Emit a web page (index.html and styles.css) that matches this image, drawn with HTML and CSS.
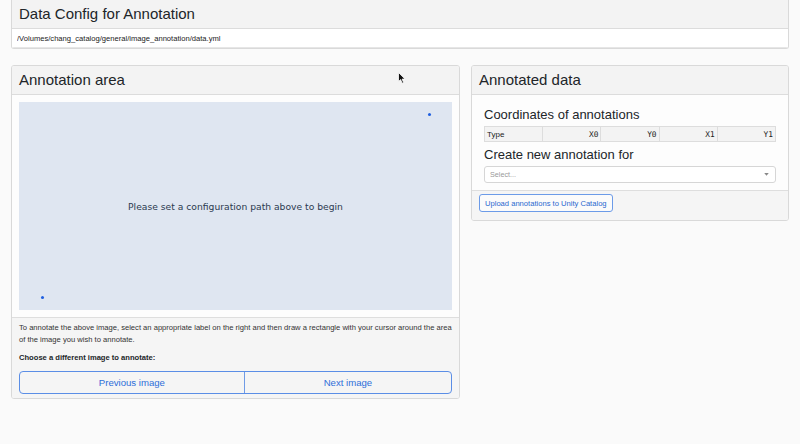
FILE: index.html
```html
<!DOCTYPE html>
<html lang="en">
<head>
    <meta charset="UTF-8">
    <meta name="viewport" content="width=device-width, initial-scale=1.0">
    <title>Data Config for Annotation</title>
    <link rel="stylesheet" href="styles.css">
</head>
<body>
    <div class="card config">
        <div class="card-header">Data Config for Annotation</div>
        <input class="path" type="text" value="/Volumes/chang_catalog/general/image_annotation/data.yml">
    </div>

    <div class="row">
        <div class="card">
            <div class="card-header">Annotation area</div>
            <div class="card-body">
                <div class="canvas">
                    <span class="dot dot-a"></span>
                    <span class="dot dot-b"></span>
                    <p>Please set a configuration path above to begin</p>
                </div>
            </div>
            <div class="card-footer">
                <p class="hint">To annotate the above image, select an appropriate label on the right and then draw a rectangle with your cursor around the area of the image you wish to annotate.</p>
                <p class="choose">Choose a different image to annotate:</p>
                <div class="btn-group">
                    <button>Previous image</button>
                    <button>Next image</button>
                </div>
            </div>
            <svg class="cursor" width="8" height="12" viewBox="0 0 8 12">
                <path d="M0.5 0.5 L0.5 9.5 L2.6 7.6 L4.2 11.2 L5.6 10.6 L4.1 7.1 L7 7.1 Z" fill="#111" stroke="#fff" stroke-width="0.8"/>
            </svg>
        </div>

        <div class="card side">
            <div class="card-header">Annotated data</div>
            <div class="card-body data">
                <h3>Coordinates of annotations</h3>
                <table>
                    <tr>
                        <td class="left">Type</td>
                        <td>X0</td>
                        <td>Y0</td>
                        <td>X1</td>
                        <td>Y1</td>
                    </tr>
                </table>
                <h3>Create new annotation for</h3>
                <div class="select">
                    <span>Select...</span>
                    <svg width="5" height="3" viewBox="0 0 6 4"><path d="M0 0 L6 0 L3 3.5 Z" fill="#888"/></svg>
                </div>
            </div>
            <div class="card-footer">
                <button class="upload">Upload annotations to Unity Catalog</button>
            </div>
        </div>
    </div>
</body>
</html>
```

FILE: styles.css
```css
body {
    font-family: "Liberation Sans", Arial, sans-serif;
    background-color: #fafafa;
    color: #212529;
    margin: 0;
    padding: 0 11px;
}
p {
    margin: 0;
}
.card {
    background-color: #fdfdfd;
    border: 1px solid #d9d9d9;
    border-radius: 3px;
    position: relative;
    overflow: hidden;
}
.card-header {
    background-color: #f3f3f3;
    border-bottom: 1px solid #dcdcdc;
    font-size: 15px;
    height: 28px;
    line-height: 28px;
    padding: 0 7px;
}
.config {
    border-top: none;
    border-radius: 0 0 3px 3px;
}
.path {
    display: block;
    width: 100%;
    box-sizing: border-box;
    border: none;
    border-bottom: 1px solid #e6e6e6;
    background: #fff;
    font-family: "Liberation Sans", Arial, sans-serif;
    font-size: 7.6px;
    height: 19px;
    padding: 0 5px;
    color: #222;
}
.row {
    display: grid;
    grid-template-columns: 449px 1fr;
    gap: 11px;
    margin-top: 16px;
    align-items: start;
}
.card-body {
    padding: 7px 7px 7px;
}
.canvas {
    background-color: #dfe6f1;
    height: 208px;
    display: flex;
    align-items: center;
    justify-content: center;
    position: relative;
}
.canvas p {
    font-family: "DejaVu Sans", Verdana, sans-serif;
    font-size: 9.2px;
    color: #2c3a50;
}
.dot {
    position: absolute;
    width: 3px;
    height: 3px;
    border-radius: 50%;
    background-color: #1f5fe0;
}
.dot-a {
    left: 409px;
    top: 11px;
}
.dot-b {
    left: 22px;
    top: 194px;
}
.cursor {
    position: absolute;
    left: 386px;
    top: 6px;
}
.card-footer {
    background-color: #f5f5f5;
    border-top: 1px solid #dedede;
    padding: 4px 7px 4px;
}
.hint {
    font-size: 7.6px;
    line-height: 12px;
    color: #333;
}
.choose {
    font-size: 7.6px;
    font-weight: bold;
    margin-top: 6px;
    line-height: 12px;
}
.btn-group {
    display: flex;
    margin-top: 7px;
    border: 1px solid #5b8ee6;
    border-radius: 4px;
    overflow: hidden;
}
.btn-group button {
    flex: 1 1 auto;
    background: transparent;
    border: none;
    color: #2e6fd9;
    font-family: "Liberation Sans", Arial, sans-serif;
    font-size: 9.6px;
    height: 21px;
    padding: 0;
}
.btn-group button + button {
    border-left: 1px solid #6f9be6;
}
.data {
    padding: 11px 12px 7px;
}
.data h3 {
    font-size: 13px;
    font-weight: normal;
    margin: 0;
    line-height: 18px;
}
table {
    width: 100%;
    border-collapse: collapse;
    margin: 2px 0 4px;
    table-layout: fixed;
}
td {
    border: 1px solid #dddddd;
    background-color: #f3f3f3;
    font-family: "DejaVu Sans Mono", "Liberation Mono", monospace;
    font-size: 7.8px;
    height: 14px;
    padding: 0 2px;
    text-align: right;
    color: #222;
}
td.left {
    text-align: left;
    font-family: "Liberation Sans", Arial, sans-serif;
    font-size: 8px;
}
.select {
    display: flex;
    justify-content: space-between;
    align-items: center;
    border: 1px solid #d6d6d6;
    border-radius: 3px;
    background: #fff;
    height: 15px;
    margin-top: 2px;
    padding: 0 6px 0 5px;
    font-size: 7.2px;
    color: #999;
}
.side .card-footer {
    display: flex;
    padding: 3px 7px 8px;
}
.upload {
    background: #fbfbfb;
    border: 1px solid #6c9be8;
    border-radius: 3px;
    color: #2a68cf;
    font-family: "Liberation Sans", Arial, sans-serif;
    font-size: 7.6px;
    height: 18px;
    padding: 0 5px;
}
```
